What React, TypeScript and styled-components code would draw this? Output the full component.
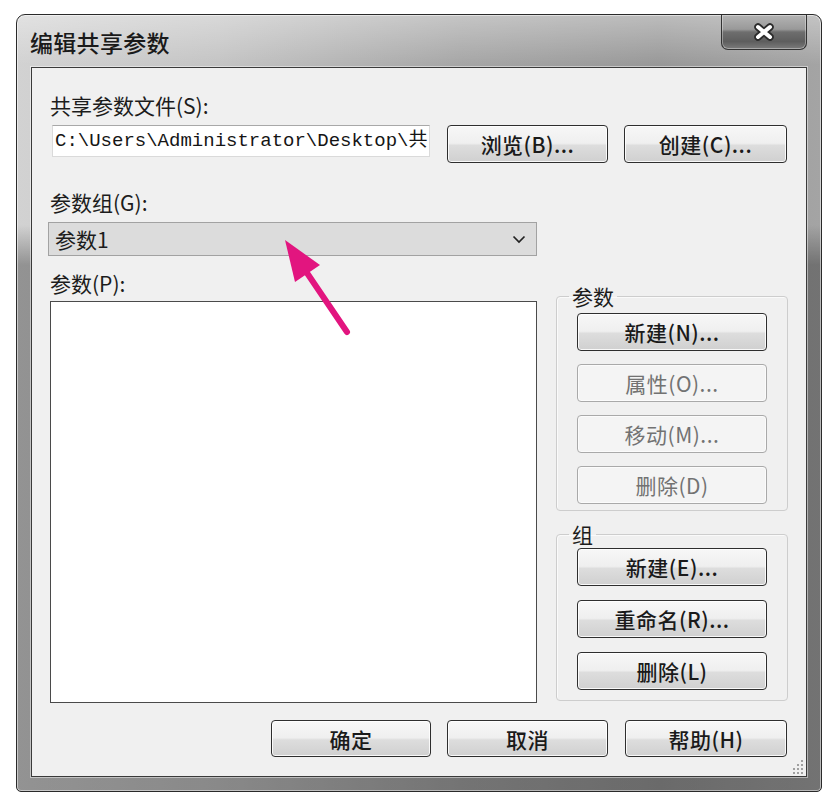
import React from "react";
import styled, { createGlobalStyle, css } from "styled-components";

const Global = createGlobalStyle`
  html, body { margin: 0; padding: 0; background: #ffffff; }
  body { font-family: "Noto Sans CJK SC", "Liberation Sans", sans-serif; }
  * { box-sizing: border-box; }
`;

const Page = styled.div`
  width: 839px;
  height: 812px;
  padding: 14px 0 0 16px;
  background: #ffffff;
`;

const Window = styled.div`
  width: 806px;
  height: 778px;
  display: flex;
  flex-direction: column;
  border: 1px solid #2a2a2a;
  border-radius: 9px 9px 5px 5px;
  padding: 0 14px 14px 14px;
  background:
    linear-gradient(180deg, rgba(255, 255, 255, 0.35) 0px, rgba(255, 255, 255, 0) 50px),
    linear-gradient(180deg, rgba(0, 0, 0, 0) 210px, rgba(0, 0, 0, 0.3) 250px),
    linear-gradient(90deg, #d2d2d2 0%, #c4c4c4 25%, #a6a6a6 55%, #989898 80%, #a4a4a4 100%);
  box-shadow: inset 0 0 0 1px rgba(255, 255, 255, 0.5);
`;

const TitleBar = styled.div`
  height: 52px;
  flex: none;
  display: flex;
  align-items: flex-start;
  justify-content: space-between;
`;

const Title = styled.div`
  margin: 12px 0 0 -1px;
  font-size: 23px;
  line-height: 30px;
  font-weight: 500;
  color: #1a1a1a;
  letter-spacing: 0.3px;
`;

const CloseButton = styled.div`
  width: 86px;
  height: 35px;
  display: flex;
  align-items: center;
  justify-content: center;
  border: 1px solid #333333;
  border-top: none;
  border-radius: 0 0 7px 7px;
  background: linear-gradient(180deg, #b4b4b4 0%, #999999 42%, #6e6e6e 50%, #5e5e5e 78%, #7c7c7c 100%);
  box-shadow: inset 0 0 0 1px rgba(255, 255, 255, 0.35);
`;

const Client = styled.div`
  flex: 1;
  position: relative;
  display: flex;
  flex-direction: column;
  background: #f0f0f0;
  border: 1px solid #3a3a3a;
  box-shadow: 0 0 0 1px rgba(255, 255, 255, 0.45);
  padding: 25px 18px 0 16px;
`;

const Label = styled.div<{ $mt?: number; $ml?: number }>`
  height: 24px;
  margin: ${(p) => p.$mt ?? 0}px 0 0 ${(p) => p.$ml ?? 2}px;
  font-size: 21px;
  line-height: 24px;
  color: #1c1c1c;
  white-space: nowrap;
`;

const FieldRow = styled.div`
  margin-top: 8px;
  height: 38px;
  display: flex;
  align-items: flex-start;
`;

const PathField = styled.div`
  flex: none;
  margin-left: 4px;
  width: 378px;
  height: 32px;
  padding-left: 2px;
  background: #ffffff;
  border: 1px solid #dadada;
  border-top-color: #a8a8a8;
  font-family: "Liberation Mono", "Noto Sans CJK SC", monospace;
  font-size: 19px;
  line-height: 30px;
  color: #151515;
  white-space: nowrap;
  overflow: hidden;
`;

const Button = styled.div<{ $w: number; $h?: number; $ml?: number; $disabled?: boolean }>`
  flex: none;
  width: ${(p) => p.$w}px;
  height: ${(p) => p.$h ?? 38}px;
  margin-left: ${(p) => p.$ml ?? 0}px;
  display: flex;
  align-items: center;
  justify-content: center;
  font-size: 21px;
  font-weight: 500;
  letter-spacing: 0.5px;
  color: #1a1a1a;
  border: 1px solid #2e2e2e;
  border-radius: 4px;
  background: linear-gradient(180deg, #f7f7f7 0%, #efefef 48%, #dddddd 54%, #d0d0d0 100%);
  box-shadow: inset 0 0 0 1px rgba(255, 255, 255, 0.85);
  white-space: nowrap;
  ${(p) =>
    p.$disabled &&
    css`
      font-weight: 400;
      color: #727272;
      border-color: #a9a9a9;
      background: #f4f4f4;
      box-shadow: inset 0 0 0 1px #fbfbfb;
    `}
`;

const Dropdown = styled.div`
  margin-top: 8px;
  width: 489px;
  height: 34px;
  display: flex;
  align-items: center;
  justify-content: space-between;
  padding: 0 10px 0 6px;
  background: #dcdcdc;
  border: 1px solid #a2a2a2;
  font-size: 21px;
  color: #1c1c1c;
`;

const Middle = styled.div`
  margin-top: 15px;
  display: flex;
  align-items: flex-start;
`;

const LeftCol = styled.div`
  width: 487px;
  margin-left: 2px;
  display: flex;
  flex-direction: column;
`;

const ListBox = styled.div`
  margin-top: 6px;
  height: 402px;
  background: #ffffff;
  border: 1px solid #4a4a4a;
`;

const RightCol = styled.div`
  width: 232px;
  margin-left: 19px;
  display: flex;
  flex-direction: column;
`;

const Group = styled.fieldset<{ $mt: number; $pt: number; $pb: number; $gap: number }>`
  margin: ${(p) => p.$mt}px 0 0 0;
  padding: ${(p) => p.$pt}px 20px ${(p) => p.$pb}px 20px;
  min-width: 0;
  border: 1px solid #cdcdcd;
  border-radius: 4px;
  box-shadow: inset 1px 1px 0 #fafafa;
  display: flex;
  flex-direction: column;
  gap: ${(p) => p.$gap}px;
`;

const Legend = styled.legend`
  margin-left: -8px;
  padding: 0 3px;
  height: 24px;
  font-size: 21px;
  line-height: 24px;
  color: #1c1c1c;
`;

const BottomRow = styled.div`
  margin-top: 17px;
  margin-right: 1px;
  display: flex;
  justify-content: flex-end;
`;

const Overlay = styled.svg`
  position: absolute;
  pointer-events: none;
`;

export default function App() {
  return (
    <Page>
      <Global />
      <Window>
        <TitleBar>
          <Title>编辑共享参数</Title>
          <CloseButton>
            <svg width="26" height="20" viewBox="0 0 26 20">
              <path d="M7 5 L19 15 M19 5 L7 15" stroke="#2b2b2b" strokeWidth="7.5" strokeLinecap="round" fill="none" />
              <path d="M7 5 L19 15 M19 5 L7 15" stroke="#ffffff" strokeWidth="4" strokeLinecap="round" fill="none" />
            </svg>
          </CloseButton>
        </TitleBar>
        <Client>
          <Label>共享参数文件(S):</Label>
          <FieldRow>
            <PathField>C:\Users\Administrator\Desktop\共</PathField>
            <Button $w={161} $ml={17}>浏览(B)...</Button>
            <Button $w={163} $ml={16}>创建(C)...</Button>
          </FieldRow>
          <Label $mt={27}>参数组(G):</Label>
          <Dropdown>
            <span>参数1</span>
            <svg width="14" height="9" viewBox="0 0 14 9">
              <polyline points="1.5,1.5 7,7 12.5,1.5" fill="none" stroke="#222" strokeWidth="1.7" />
            </svg>
          </Dropdown>
          <Middle>
            <LeftCol>
              <Label $ml={0}>参数(P):</Label>
              <ListBox />
            </LeftCol>
            <RightCol>
              <Group $mt={13} $pt={5} $pb={6} $gap={13}>
                <Legend>参数</Legend>
                <Button $w={190}>新建(N)...</Button>
                <Button $w={190} $disabled>属性(O)...</Button>
                <Button $w={190} $disabled>移动(M)...</Button>
                <Button $w={190} $disabled>删除(D)</Button>
              </Group>
              <Group $mt={11} $pt={2} $pb={10} $gap={14}>
                <Legend>组</Legend>
                <Button $w={190}>新建(E)...</Button>
                <Button $w={190}>重命名(R)...</Button>
                <Button $w={190}>删除(L)</Button>
              </Group>
            </RightCol>
          </Middle>
          <BottomRow>
            <Button $w={160} $h={37}>确定</Button>
            <Button $w={161} $h={37} $ml={16}>取消</Button>
            <Button $w={162} $h={37} $ml={17}>帮助(H)</Button>
          </BottomRow>
          <Overlay width="14" height="16" viewBox="0 0 14 16" style={{ right: 1, bottom: 1 }}>
            {[
              [10, 1], [10, 5], [6, 5], [10, 9], [6, 9], [2, 9], [10, 13], [6, 13], [2, 13],
            ].map(([x, y], i) => (
              <rect key={i} x={x} y={y} width="2" height="2" fill="#a0a0a0" />
            ))}
          </Overlay>
          <Overlay width="90" height="115" viewBox="0 0 90 115" style={{ left: 240, top: 160 }}>
            <line x1="33" y1="42" x2="75" y2="104" stroke="#e2157f" strokeWidth="6" strokeLinecap="round" />
            <polygon points="13,12 48,37 23,54" fill="#e2157f" />
          </Overlay>
        </Client>
      </Window>
    </Page>
  );
}
